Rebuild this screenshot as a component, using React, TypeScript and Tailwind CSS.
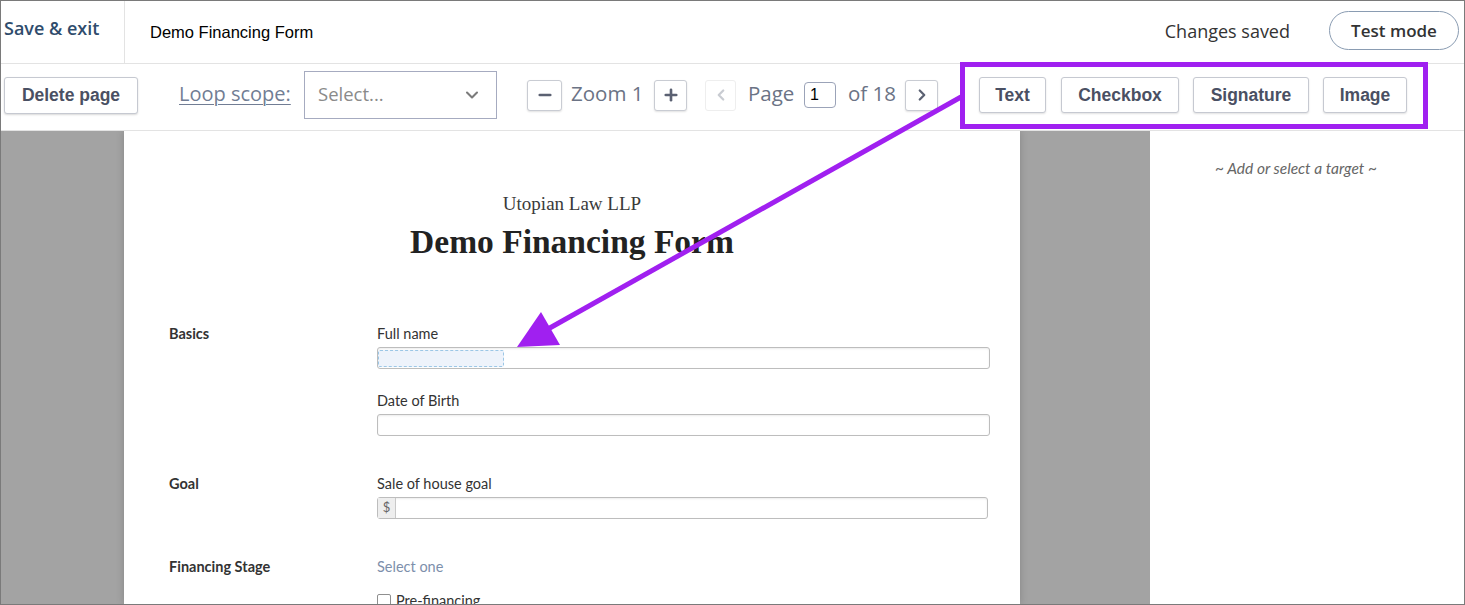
import React from 'react';
import { ChevronDown, ChevronLeft, ChevronRight, Minus, Plus } from 'lucide-react';

// small square buttons in the zoom / paging group
function SquareButton({
  className,
  disabled,
  children,
}: {
  className: string;
  disabled?: boolean;
  children: React.ReactNode;
}) {
  return (
    <button
      className={`${className} h-[31px] flex items-center justify-center rounded-[3px] border bg-white ${
        disabled
          ? 'border-[#eeeeee] text-[#c9ccd2]'
          : 'border-[#c9ccd3] text-[#5b6172] shadow-[0_1px_2px_rgba(0,0,0,0.12)]'
      }`}
    >
      {children}
    </button>
  );
}

// "Text", "Checkbox", ... target tools
function ToolButton({ className, label }: { className: string; label: string }) {
  return (
    <button
      className={`${className} h-[36px] rounded-[3px] border border-[#c6c9d1] bg-white shadow-[0_1px_2px_rgba(0,0,0,0.12)] font-['Liberation_Sans',sans-serif] text-[17.5px] font-bold text-[#4a5063]`}
    >
      {label}
    </button>
  );
}

function Field({
  label,
  className = '',
  target,
  money,
}: {
  label: string;
  className?: string;
  target?: boolean;
  money?: boolean;
}) {
  return (
    <div className={className}>
      <div className="text-[14.5px] leading-[18px] text-[#333]">{label}</div>
      <div
        className={`relative mt-[4px] h-[22px] flex rounded-[3px] border border-[#bdbdbd] bg-white shadow-[inset_0_1px_2px_rgba(0,0,0,0.08)] ${
          money ? 'w-[611px]' : 'w-[613px]'
        }`}
      >
        {money && (
          <span className="w-[18px] flex items-center justify-center bg-[#eeeeee] border-r border-[#c8c8c8] text-[13px] text-[#666]">
            $
          </span>
        )}
        {/* dashed placeholder for the currently placed target */}
        {target && (
          <div className="absolute left-[0px] top-[2px] w-[126px] h-[17px] rounded-[2px] border border-dashed border-[#9cc7e6] bg-[#eef3fb]" />
        )}
      </div>
    </div>
  );
}

function Section({
  label,
  className = '',
  children,
}: {
  label: string;
  className?: string;
  children: React.ReactNode;
}) {
  return (
    <div className={`flex ${className}`}>
      <div className="w-[208px] shrink-0 text-[14.5px] leading-[18px] font-bold text-[#333]">{label}</div>
      <div className="flex-1">{children}</div>
    </div>
  );
}

export default function App() {
  return (
    <div className="relative w-[1465px] h-[605px] overflow-hidden border border-[#7a7a7a] bg-white flex flex-col font-['Open_Sans',sans-serif]">
      {/* Header */}
      <header className="h-[63px] shrink-0 flex border-b border-[#e3e3e3]">
        <div className="w-[124px] shrink-0 border-r border-[#e3e3e3] pl-[3px] pt-[14px]">
          <span className="text-[18px] font-semibold text-[#2f4c6c]">Save &amp; exit</span>
        </div>
        <div className="pl-[25px] flex items-center font-['Liberation_Sans',sans-serif] text-[16.5px] text-black">
          Demo Financing Form
        </div>
        <div className="ml-auto mr-[5px] flex items-center">
          <span className="text-[18px] text-[#333] mb-[1px]">Changes saved</span>
          <button className="ml-[39px] w-[130px] h-[39px] mb-[3px] rounded-full border-[1.5px] border-[#8a9cb2] bg-white text-[17px] font-semibold text-[#333]">
            Test mode
          </button>
        </div>
      </header>

      {/* Toolbar */}
      <div className="h-[67px] shrink-0 flex items-center pb-[4px] border-b border-[#e3e3e3]">
        <button className="ml-[3px] w-[134px] h-[37px] rounded-[3px] border border-[#c6c9d1] bg-white shadow-[0_1px_2px_rgba(0,0,0,0.15)] font-['Liberation_Sans',sans-serif] text-[17.5px] font-bold text-[#4a5063]">
          Delete page
        </button>
        <span className="ml-[41px] mb-[3px] w-[114px] whitespace-nowrap text-[20px] text-[#717d94] underline underline-offset-[3px] decoration-1">
          Loop scope:
        </span>
        <div className="ml-[11px] w-[193px] h-[48px] flex items-center justify-between pl-[13px] pr-[14px] border border-[#a6abc0] bg-white">
          <span className="text-[18.5px] text-[#8a8a8a] mb-[2px]">Select...</span>
          <ChevronDown size={20} strokeWidth={2.5} className="text-[#7b7b7b]" />
        </div>
        <SquareButton className="ml-[30px] w-[35px]">
          <Minus size={18} strokeWidth={3.5} />
        </SquareButton>
        <span className="ml-[9px] mb-[3px] w-[72px] whitespace-nowrap text-[20.5px] text-[#6b7385]">Zoom 1</span>
        <SquareButton className="ml-[11px] w-[33px]">
          <Plus size={18} strokeWidth={3.5} />
        </SquareButton>
        <SquareButton className="ml-[18px] w-[31px]" disabled>
          <ChevronLeft size={18} strokeWidth={3} />
        </SquareButton>
        <span className="ml-[12px] mb-[3px] w-[45px] whitespace-nowrap text-[20.5px] text-[#6b7385]">Page</span>
        <div className="ml-[11px] w-[32px] h-[26px] flex items-center pl-[5px] rounded-[4px] border border-[#9ba3b8] font-['Liberation_Sans',sans-serif] text-[16px] text-black">
          1
        </div>
        <span className="ml-[12px] mb-[3px] w-[47px] whitespace-nowrap text-[20.5px] text-[#6b7385]">of 18</span>
        <SquareButton className="ml-[10px] w-[33px]">
          <ChevronRight size={18} strokeWidth={3} />
        </SquareButton>
        <ToolButton className="ml-[41px] w-[67px]" label="Text" />
        <ToolButton className="ml-[15px] w-[118px]" label="Checkbox" />
        <ToolButton className="ml-[14px] w-[116px]" label="Signature" />
        <ToolButton className="ml-[14px] w-[84px]" label="Image" />
      </div>

      {/* Workspace */}
      <div className="flex-1 flex min-h-0 overflow-hidden">
        <div className="w-[1149px] shrink-0 bg-[#a3a3a3] flex">
          <div className="ml-[123px] w-[896px] bg-white shadow-[0_0_8px_rgba(0,0,0,0.18)] font-['Lato',sans-serif]">
            <div className="pt-[61px] text-center font-['Liberation_Serif',serif] text-[#222]">
              <div className="text-[19px] leading-[24px] text-[#3a3a3a]">Utopian Law LLP</div>
              <div className="mt-[8px] text-[33.5px] leading-[36px] font-bold">Demo Financing Form</div>
            </div>

            <div className="pl-[45px] pr-[30px] mt-[65px]">
              <Section label="Basics">
                <Field label="Full name" target />
                <Field label="Date of Birth" className="mt-[23px]" />
              </Section>
              <Section label="Goal" className="mt-[39px]">
                <Field label="Sale of house goal" money />
              </Section>
              <Section label="Financing Stage" className="mt-[39px]">
                <div className="text-[14.5px] leading-[18px] text-[#7d8fab]">Select one</div>
                <label className="mt-[16px] flex items-center gap-[5px] text-[14.5px] leading-[18px] text-[#333]">
                  <span className="w-[14px] h-[14px] rounded-[2px] border border-[#8f8f8f] bg-white" />
                  Pre-financing
                </label>
              </Section>
            </div>
          </div>
        </div>

        {/* Target properties panel */}
        <div className="flex-1 bg-white pt-[25px] pr-[22px] text-center">
          <span className="font-['Lato',sans-serif] italic text-[15.5px] leading-[20px] text-[#666]">
            ~ Add or select a target ~
          </span>
        </div>
      </div>

      {/* Annotation: highlight box around the target tools */}
      <div className="absolute left-[959px] top-[61px] w-[468px] h-[67px] border-[5px] border-[#a020f0] pointer-events-none" />

      {/* Annotation arrow */}
      <svg
        className="absolute -left-px -top-px pointer-events-none"
        width={1465}
        height={605}
        viewBox="0 0 1465 605"
      >
        <line x1={961} y1={97} x2={548} y2={329} stroke="#a020f0" strokeWidth={5} />
        <polygon points="517,347 541,312 560,345" fill="#a020f0" />
      </svg>
    </div>
  );
}
